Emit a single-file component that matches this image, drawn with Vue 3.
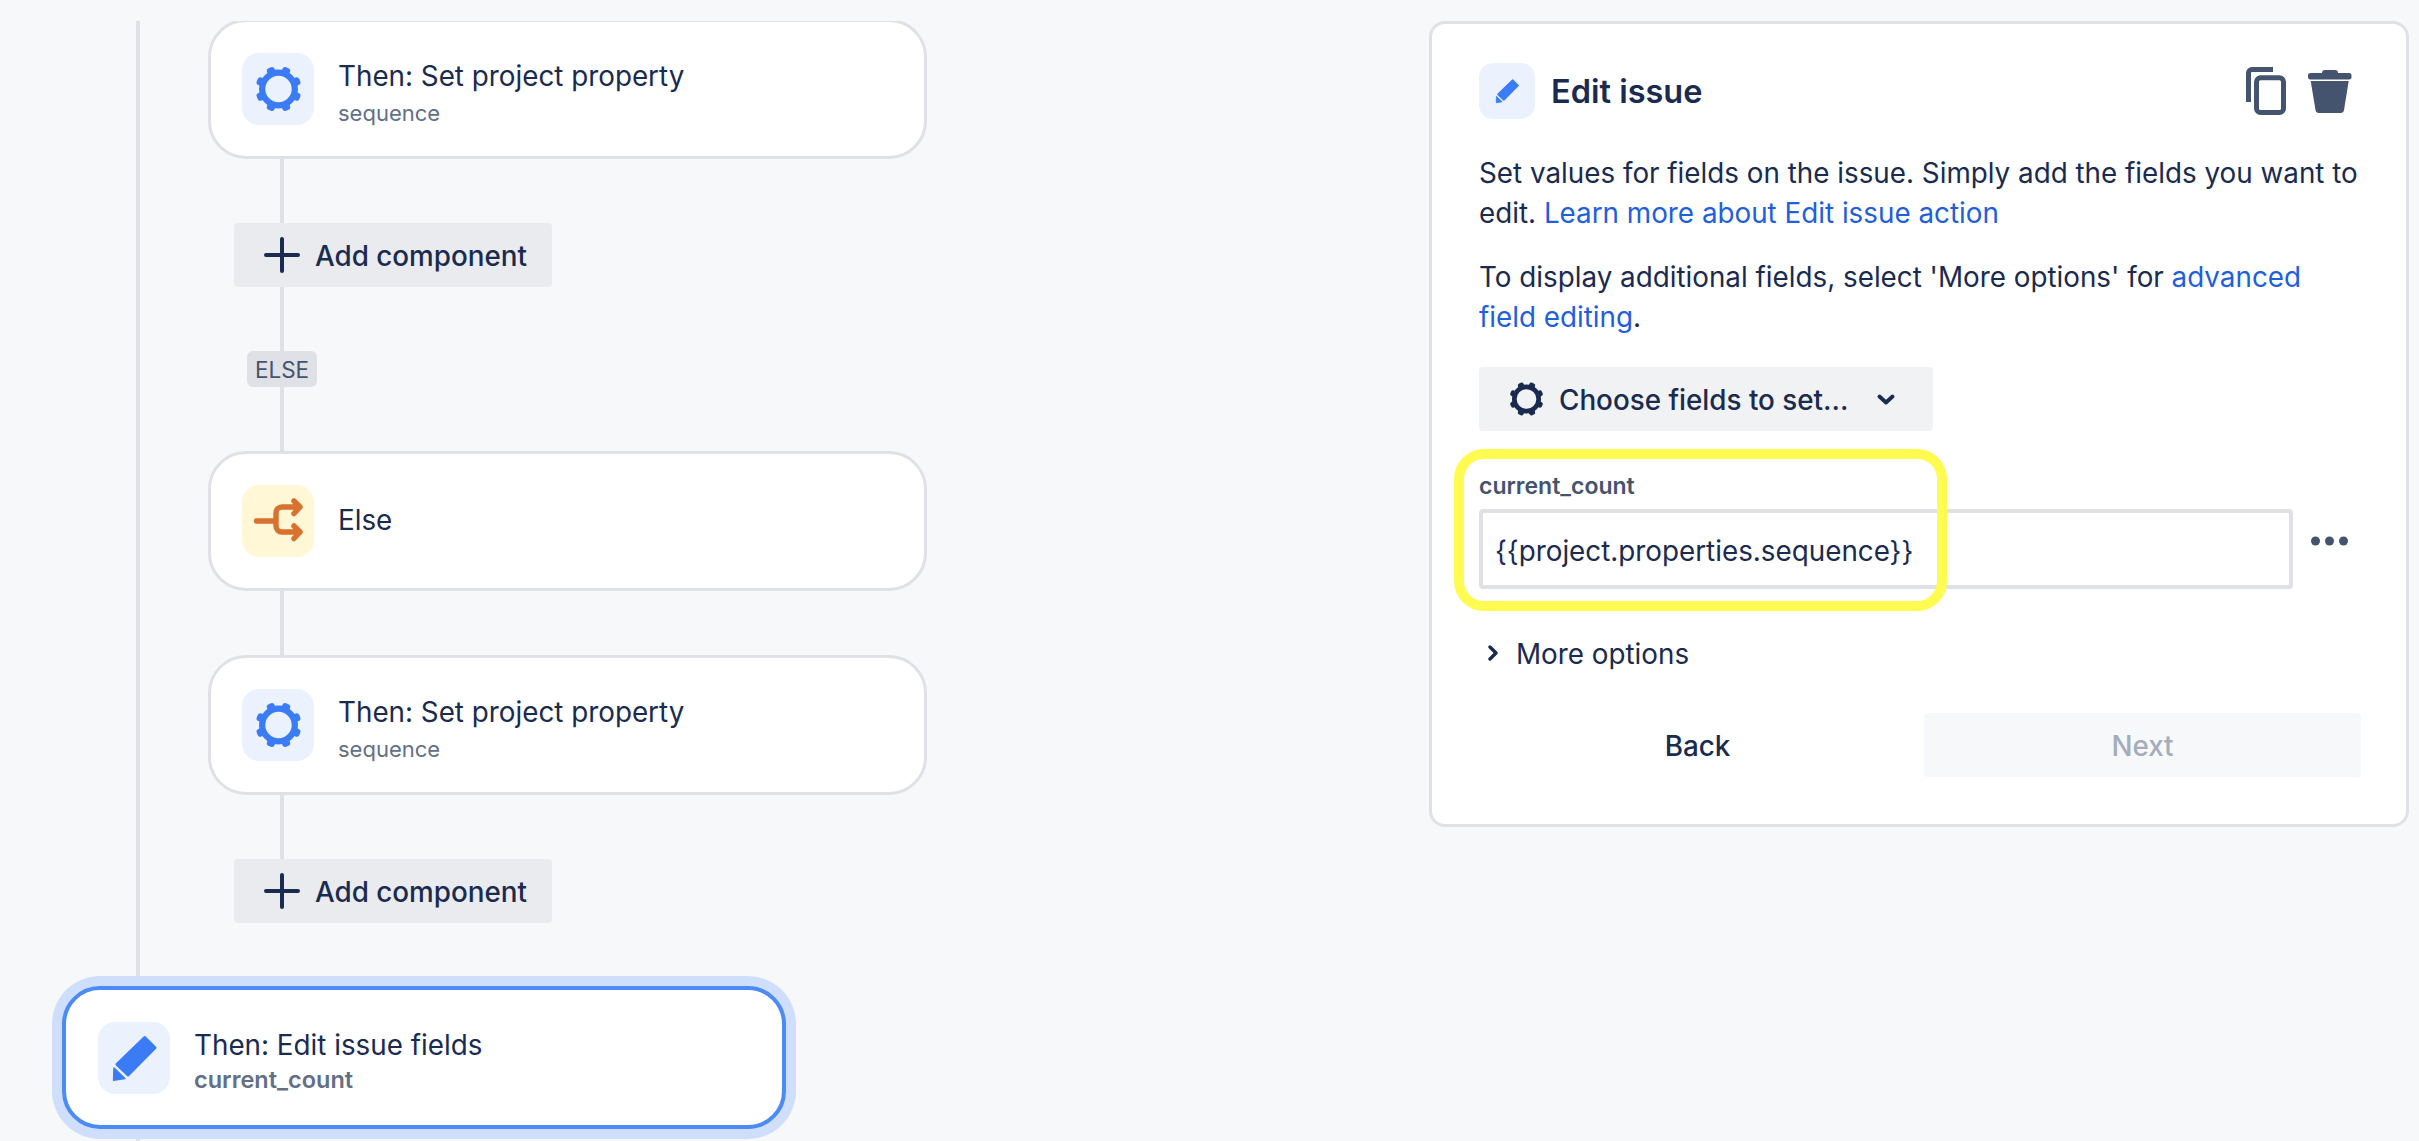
<script setup>
const teeth = [22.5, 67.5, 112.5, 157.5, 202.5, 247.5, 292.5, 337.5]
const expr = '{{project.properties.sequence}}'
</script>

<template>
  <div class="page">
    <svg class="defs" width="0" height="0" aria-hidden="true">
      <defs>
        <symbol id="gear" viewBox="0 0 48 48">
          <circle cx="24" cy="24" r="16.700" fill="none" stroke="currentColor" stroke-width="6.400" />
          <rect
            v-for="a in teeth"
            :key="a"
            x="19.800"
            y="0.500"
            width="8.400"
            height="9"
            rx="3"
            fill="currentColor"
            :transform="`rotate(${a} 24 24)`"
          />
        </symbol>
        <symbol id="pencil" viewBox="0 0 72 72">
          <path d="M46.7 15.5 57 25.7 30 53 19 42.3Z" fill="currentColor" stroke="currentColor" stroke-width="3" stroke-linejoin="round" />
          <path d="M16 46 26.8 56.6 15.6 58.2Z" fill="currentColor" stroke="currentColor" stroke-width="1.5" stroke-linejoin="round" />
        </symbol>
      </defs>
    </svg>

    <section class="canvas">
      <div class="rail"></div>
      <div class="branch">
        <div class="clip">
          <article class="card first">
            <span class="tile blue"><svg class="gear"><use href="#gear" /></svg></span>
            <div class="copy two">
              <div class="title">Then: Set project property</div>
              <div class="sub">sequence</div>
            </div>
          </article>
        </div>
        <div class="conn"></div>
        <button class="add">
          <svg class="plus" viewBox="0 0 36 36"><path d="M18 2v32M2 18h32" fill="none" stroke="currentColor" stroke-width="4" stroke-linecap="round" /></svg>
          <span>Add component</span>
        </button>
        <div class="conn"></div>
        <div class="badge">ELSE</div>
        <div class="conn"></div>
        <article class="card">
          <span class="tile yellow">
            <svg class="shuffle" viewBox="0 0 72 72">
              <path d="M14.500 36H34M57.500 22H40a6 6 0 0 0-6 6V41a6 6 0 0 0 6 6H57.500M52 16l6 6-6 6.500M52 41l6 6-6 6.500" fill="none" stroke="currentColor" stroke-width="5.500" stroke-linecap="round" stroke-linejoin="round" />
            </svg>
          </span>
          <div class="copy single"><div class="title">Else</div></div>
        </article>
        <div class="conn"></div>
        <article class="card">
          <span class="tile blue"><svg class="gear"><use href="#gear" /></svg></span>
          <div class="copy two">
            <div class="title">Then: Set project property</div>
            <div class="sub">sequence</div>
          </div>
        </article>
        <div class="conn"></div>
        <button class="add">
          <svg class="plus" viewBox="0 0 36 36"><path d="M18 2v32M2 18h32" fill="none" stroke="currentColor" stroke-width="4" stroke-linecap="round" /></svg>
          <span>Add component</span>
        </button>
      </div>
      <article class="card selected">
        <span class="tile blue"><svg class="pencil-lg"><use href="#pencil" /></svg></span>
        <div class="copy two">
          <div class="title">Then: Edit issue fields</div>
          <div class="sub strong">current_count</div>
        </div>
      </article>
    </section>

    <aside class="panel">
      <header class="head">
        <span class="tile small blue"><svg class="pencil-sm"><use href="#pencil" /></svg></span>
        <h2>Edit issue</h2>
        <div class="tools">
          <svg class="i-copy" viewBox="0 0 40 48">
            <path d="M2.500 35V6a3.500 3.500 0 0 1 3.500-3.500H27" fill="none" stroke="currentColor" stroke-width="5" />
            <rect x="10.500" y="10.800" width="27" height="34.700" rx="4" fill="none" stroke="currentColor" stroke-width="5" />
          </svg>
          <svg class="i-trash" viewBox="0 0 44 43">
            <path d="M14 3a3 3 0 0 1 3-3H27a3 3 0 0 1 3 3H14Z" fill="currentColor" />
            <rect x="0" y="3" width="43.500" height="6.500" rx="2.500" fill="currentColor" />
            <path d="M2.700 11H40.700L36 40a3.500 3.500 0 0 1-3.500 3H11a3.500 3.500 0 0 1-3.500-3Z" fill="currentColor" />
          </svg>
        </div>
      </header>

      <p class="p1">Set values for fields on the issue. Simply add the fields you want to edit. <a>Learn more about Edit issue action</a></p>
      <p class="p2">To display additional fields, select 'More options' for <a>advanced field editing</a>.</p>

      <button class="choose">
        <svg class="gear-dark"><use href="#gear" /></svg>
        <span>Choose fields to set...</span>
        <svg class="chev" viewBox="0 0 18 11"><path d="M2.500 2.500l6.500 6 6.500-6" fill="none" stroke="currentColor" stroke-width="3.800" stroke-linecap="round" stroke-linejoin="round" /></svg>
      </button>

      <div class="field">
        <label>current_count</label>
        <div class="row">
          <div class="input">{{ expr }}</div>
          <svg class="dots" viewBox="0 0 37 14"><circle cx="4.500" cy="7" r="4.500" /><circle cx="18.500" cy="7" r="4.500" /><circle cx="32.500" cy="7" r="4.500" /></svg>
        </div>
        <div class="marker"></div>
      </div>

      <div class="more">
        <svg viewBox="0 0 11 16"><path d="M2 2l6 6-6 6" fill="none" stroke="currentColor" stroke-width="3.400" stroke-linecap="round" stroke-linejoin="round" /></svg>
        <span>More options</span>
      </div>

      <div class="actions">
        <button class="back"><span>Back</span></button>
        <button class="next"><span>Next</span></button>
      </div>
    </aside>
  </div>
</template>

<style scoped>
.page {
  width: 2419px;
  height: 1141px;
  overflow: hidden;
  box-sizing: border-box;
  padding-top: 21px;
  display: flex;
  align-items: flex-start;
  background: #f7f8f9;
  color: #1a2b4f;
  font-family: Inter, "Liberation Sans", sans-serif;
  font-size: 27.8px;
}
.defs { position: absolute; }
.canvas {
  position: relative;
  width: 1429px;
  height: 1120px;
  flex: none;
}
.rail {
  position: absolute;
  left: 136px;
  top: 0;
  bottom: 0;
  width: 4px;
  background: #dfe1e6;
}
.branch {
  position: relative;
  margin-left: 208px;
  width: 719px;
  display: flex;
  flex-direction: column;
  align-items: flex-start;
}
.clip {
  width: 100%;
  height: 138px;
  overflow: hidden;
  display: flex;
  align-items: flex-end;
  flex: none;
}
.card {
  flex: none;
  box-sizing: border-box;
  width: 719px;
  height: 140px;
  display: flex;
  align-items: center;
  gap: 24px;
  padding-left: 31px;
  background: #fff;
  border: 3px solid #dfe1e6;
  border-radius: 38px;
}
.conn {
  width: 4px;
  height: 64px;
  margin-left: 72px;
  background: #dfe1e6;
}
.tile {
  flex: none;
  width: 72px;
  height: 72px;
  border-radius: 17px;
  display: flex;
  align-items: center;
  justify-content: center;
}
.tile.small { width: 56px; height: 56px; border-radius: 14px; }
.blue { background: #ebf2fe; color: #3b7bf6; }
.yellow { background: #fff7d6; color: #d9722f; }
.gear { width: 47px; height: 48px; }
.pencil-lg { width: 72px; height: 72px; }
.pencil-sm { width: 38px; height: 38px; }
.shuffle { width: 72px; height: 72px; }
.title { font-size: 27.8px; line-height: 38px; }
.two { padding-top: 9px; }
.single { padding-bottom: 2px; }
.sub { margin-top: 0; font-size: 22px; line-height: 36px; color: #626f86; }
.sub.strong { margin-top: -2px; font-size: 23.5px; font-weight: 600; }
.add {
  width: 318px;
  height: 64px;
  padding: 0 0 0 30px;
  display: flex;
  align-items: center;
  gap: 15px;
  margin-left: 26px;
  border: 0;
  border-radius: 4px;
  background: #e9ebef;
  color: #1a2b4f;
  font: 500 27.8px Inter, "Liberation Sans", sans-serif;
}
.add span, .choose span, .actions span { margin-top: 2px; display: block; }
.plus { width: 36px; height: 36px; flex: none; }
.badge {
  width: 70px;
  height: 36px;
  margin-left: 39px;
  border-radius: 6px;
  background: #dfe1e6;
  color: #44546f;
  font-size: 22.5px;
  line-height: 37px;
  text-align: center;
}
.selected {
  position: relative;
  width: 724px;
  height: 143px;
  margin-left: 62px;
  margin-top: 63px;
  padding-left: 32px;
  border: 4px solid #4c8bf5;
  box-shadow: 0 0 0 10px #cfdffb;
}

.panel {
  flex: none;
  box-sizing: border-box;
  width: 980px;
  height: 806px;
  padding: 39px 45px 0 47px;
  background: #fff;
  border: 3px solid #dfe1e6;
  border-radius: 16px;
}
.head { display: flex; align-items: center; height: 56px; gap: 16px; }
.head h2 { margin: 0; font-size: 32.5px; font-weight: 600; }
.tools { margin-left: auto; margin-right: 9px; display: flex; align-items: center; gap: 22px; color: #44546f; }
.i-copy { width: 40px; height: 48px; }
.i-trash { width: 44px; height: 43px; }
p { margin: 0; line-height: 40px; width: 886px; }
.p1 { margin-top: 34px; }
.p2 { margin-top: 24px; }
a { color: #1f5fdc; }
.choose {
  width: 454px;
  height: 64px;
  margin-top: 30px;
  padding: 0 0 0 30px;
  display: flex;
  align-items: center;
  border: 0;
  border-radius: 4px;
  background: #f1f2f4;
  color: #1a2b4f;
  font: 500 27.8px Inter, "Liberation Sans", sans-serif;
}
.gear-dark { width: 35px; height: 36px; flex: none; margin-right: 15px; }
.chev { width: 18px; height: 11px; margin-left: 29px; flex: none; }
.field { position: relative; margin-top: 40px; }
label { display: block; font-size: 23px; line-height: 30px; font-weight: 600; color: #44546f; }
.row { display: flex; align-items: flex-start; gap: 18px; margin-top: 8px; }
.input {
  box-sizing: border-box;
  width: 814px;
  height: 80px;
  padding-left: 12px;
  border: 4px solid #dfe1e6;
  border-radius: 4px;
  line-height: 76px;
}
.dots { width: 37px; height: 14px; margin-top: 25px; fill: #44546f; }
.marker {
  position: absolute;
  left: -25px;
  top: -22px;
  width: 493px;
  height: 162px;
  box-sizing: border-box;
  border: 10px solid #fffb50;
  border-radius: 30px;
  pointer-events: none;
}
.more { display: flex; align-items: center; height: 40px; margin-top: 45px; padding-left: 9px; gap: 17px; }
.more svg { width: 11px; height: 16px; margin-top: -2px; }
.actions { display: grid; grid-template-columns: 437px 437px; gap: 8px; margin-top: 39px; }
.actions button {
  height: 64px;
  border: 0;
  border-radius: 4px;
  font: 500 27.8px Inter, "Liberation Sans", sans-serif;
}
.back { background: #fff; color: #1a2b4f; }
.next { background: #f7f8f9; color: #a5adba; }
</style>
